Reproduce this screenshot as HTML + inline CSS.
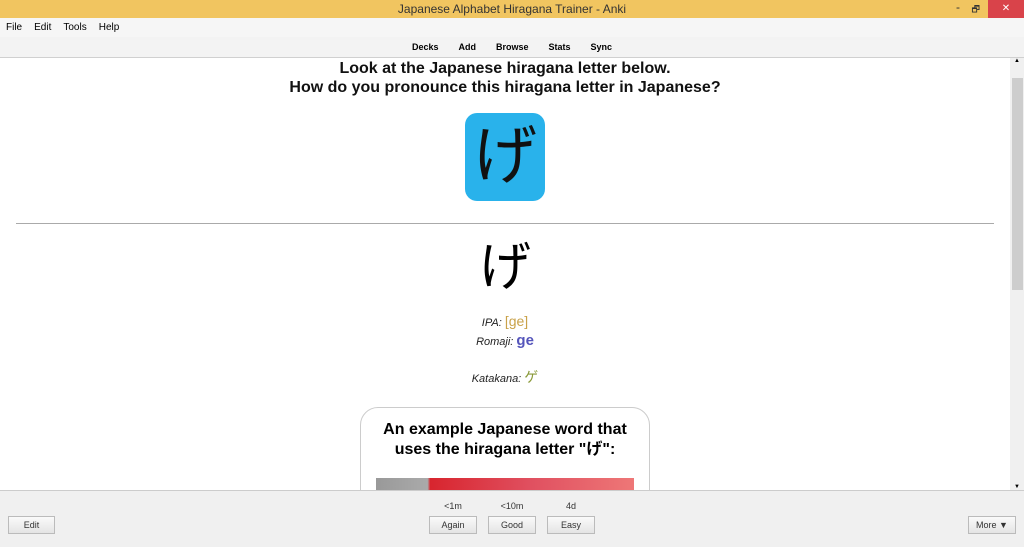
<!DOCTYPE html>
<html><head><meta charset="utf-8"><style>
*{margin:0;padding:0;box-sizing:border-box}
body{width:1024px;height:547px;overflow:hidden;background:#fff;font-family:"Liberation Sans","Noto Sans CJK JP",sans-serif;position:relative}
.title{position:absolute;left:0;top:0;width:1024px;height:18px;background:#f1c560;font-size:12px;color:#333;text-align:center;line-height:18px}
.close{position:absolute;right:0;top:0;width:36px;height:18px;background:#d9434a;color:#fff;font-size:10px;line-height:18px;text-align:center}
.menu{position:absolute;top:18px;left:0;width:1024px;height:19px;background:#f6f6f6;font-size:10px;line-height:19px;padding-left:6px}
.menu span{margin-right:12px}
.tool{position:absolute;top:37px;left:0;width:1024px;height:21px;background:#f3f3f3;border-bottom:1px solid #d0d0d0;font-size:9px;font-weight:bold;text-align:center;line-height:20px}
.tool span{margin:0 10px}
.content{position:absolute;top:58px;left:0;width:1010px;height:432px;text-align:center;overflow:hidden}
.sb{position:absolute;top:58px;right:0;width:14px;height:432px;background:#f0f0f0}
.thumb{position:absolute;top:20px;left:2px;width:11px;height:212px;background:#cdcdcd}
h1{font-size:16px;line-height:19px;font-weight:bold;color:#111;margin-top:1px}
.icon{width:80px;height:88px;background:#29b2eb;border-radius:12px;margin:16px auto 0;font-size:64px;line-height:86px;color:#111}
hr{border:0;border-top:1px solid #aaa;margin:22px 16px 0}
.big{font-size:52px;line-height:60px;margin-top:14px}
.it{font-style:italic;font-size:11px;color:#222}
.card{width:290px;height:120px;border:1px solid #ccc;border-radius:18px;margin:20px auto 0;padding-top:12px;font-size:16px;font-weight:bold;line-height:20px}
.img{width:258px;height:40px;margin:18px auto 0;background:linear-gradient(90deg,#999 0,#aaa 20%,#d8252e 21%,#e05060 60%,#e77 100%)}
.bottom{position:absolute;top:490px;left:0;width:1024px;height:57px;background:#f0f0f0;border-top:1px solid #ccc}
.btn{position:absolute;height:18px;border:1px solid #bbb;background:linear-gradient(#fafafa,#e4e4e4);font-size:9px;line-height:16px;text-align:center;color:#333}
.lbl{position:absolute;top:10px;font-size:9px;color:#333;text-align:center;width:48px}
</style></head><body>
<div class="title">Japanese Alphabet Hiragana Trainer - Anki<div class="close">✕</div><span style="position:absolute;right:44px;top:0;font-size:9px">🗗</span><span style="position:absolute;right:64px;top:-2px">-</span></div>
<div class="menu"><span>File</span><span>Edit</span><span>Tools</span><span>Help</span></div>
<div class="tool"><span>Decks</span><span>Add</span><span>Browse</span><span>Stats</span><span>Sync</span></div>
<div class="content">
<h1>Look at the Japanese hiragana letter below.<br>How do you pronounce this hiragana letter in Japanese?</h1>
<div class="icon">げ</div>
<hr>
<div class="big">げ</div>
<div style="margin-top:14px;line-height:18px"><span class="it">IPA: </span><span style="color:#c9a24a;font-size:14px">[ge]</span><br><span class="it">Romaji: </span><span style="color:#5555bb;font-size:15px;font-weight:bold">ge</span></div>
<div style="margin-top:16px"><span class="it">Katakana: </span><span style="color:#8a9a3a;font-size:14px">ゲ</span></div>
<div class="card">An example Japanese word that<br>uses the hiragana letter "げ":<div class="img"></div></div>
</div>
<div class="sb"><div style="font-size:6px;text-align:center">▲</div><div class="thumb"></div><div style="position:absolute;bottom:0;width:14px;font-size:6px;text-align:center">▼</div></div>
<div class="bottom">
<div class="btn" style="left:8px;top:25px;width:47px">Edit</div>
<div class="lbl" style="left:429px">&lt;1m</div>
<div class="lbl" style="left:488px">&lt;10m</div>
<div class="lbl" style="left:547px">4d</div>
<div class="btn" style="left:429px;top:25px;width:48px">Again</div>
<div class="btn" style="left:488px;top:25px;width:48px">Good</div>
<div class="btn" style="left:547px;top:25px;width:48px">Easy</div>
<div class="btn" style="left:968px;top:25px;width:48px">More ▼</div>
</div>
</body></html>
